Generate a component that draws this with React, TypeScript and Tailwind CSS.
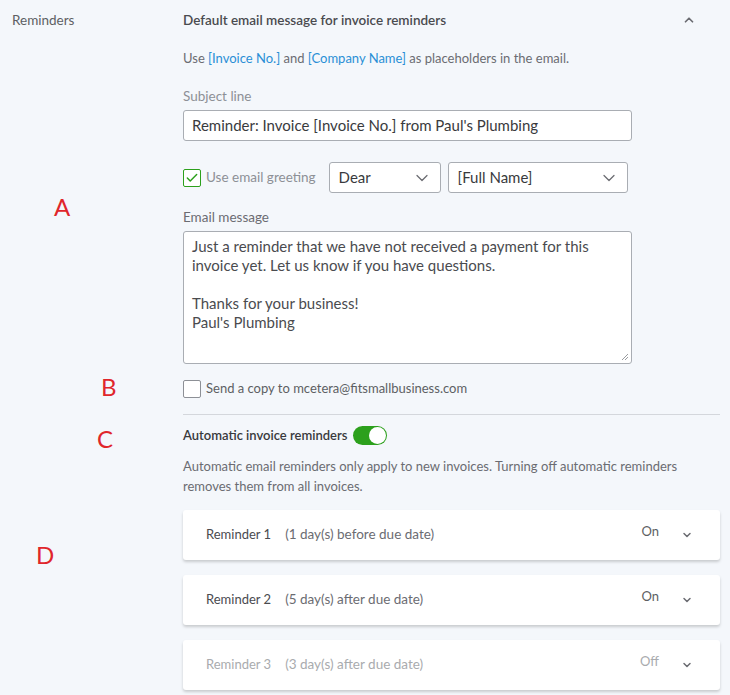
import { ChevronDown, ChevronUp, Check } from "lucide-react";

const reminders = [
  { name: "Reminder 1", when: "(1 day(s) before due date)", on: true },
  { name: "Reminder 2", when: "(5 day(s) after due date)", on: true },
  { name: "Reminder 3", when: "(3 day(s) after due date)", on: false },
];

function Letter({ children, className }: { children: string; className?: string }) {
  return (
    <span className={`text-[24px] leading-none text-[#e0262b] ${className ?? ""}`}>
      {children}
    </span>
  );
}

function Select({ value, width }: { value: string; width: string }) {
  return (
    <div
      className={`${width} h-[31px] bg-white border border-[#a9adb3] rounded-[3px] flex items-center justify-between pl-[9px] pr-[8px] text-[15px] text-[#393a3d]`}
    >
      <span>{value}</span>
      <ChevronDown size={20} strokeWidth={1.5} className="text-[#6b6c72]" />
    </div>
  );
}

export default function App() {
  return (
    <div
      className="min-h-screen w-[730px] bg-[#f4f7fb] text-[#393a3d]"
      style={{ fontFamily: "'Lato', 'Noto Sans', sans-serif" }}
    >
      {/* header row */}
      <div className="flex pt-[11px] leading-[18px]">
        <div className="w-[183px] pl-[12px] text-[13.5px] text-[#5d5f63]">Reminders</div>
        <div className="flex-1 flex items-center justify-between pr-[34px]">
          <span className="text-[13.5px] font-semibold text-[#4a4b4f]">
            Default email message for invoice reminders
          </span>
          <ChevronUp size={14} strokeWidth={3} className="text-[#6b6c72]" />
        </div>
      </div>

      {/* A: email message */}
      <div className="flex mt-[20px]">
        <div className="w-[183px] flex items-center pl-[54px]">
          <Letter>A</Letter>
        </div>
        <div className="flex-1 pr-[98px]">
          <p className="text-[13px] leading-[18px] text-[#6b6c72]">
            Use <span className="text-[#2a8fd6]">[Invoice No.]</span> and{" "}
            <span className="text-[#2a8fd6]">[Company Name]</span> as placeholders in the email.
          </p>
          <div className="mt-[20px] text-[13.5px] leading-[18px] text-[#8d9096]">Subject line</div>
          <div className="mt-[5px] h-[31px] bg-white border border-[#a9adb3] rounded-[3px] flex items-center px-[8px] text-[15px] text-[#393a3d]">
            Reminder: Invoice [Invoice No.] from Paul's Plumbing
          </div>
          <div className="mt-[21px] flex items-center">
            <div className="w-[18px] h-[18px] bg-white border border-[#2ca01c] rounded-[2px] flex items-center justify-center">
              <Check size={14} strokeWidth={2.5} className="text-[#2ca01c]" />
            </div>
            <span className="ml-[5px] text-[13.5px] text-[#8d9096]">Use email greeting</span>
            <div className="ml-[13px] flex gap-[7px]">
              <Select value="Dear" width="w-[112px]" />
              <Select value="[Full Name]" width="w-[180px]" />
            </div>
          </div>
          <div className="mt-[15px] text-[13.5px] leading-[18px] text-[#6b6c72]">Email message</div>
          <div className="mt-[5px] h-[133px] bg-white border border-[#a9adb3] rounded-[3px] px-[8px] py-[5px] text-[15px] leading-[19px] text-[#4a4b4f] relative">
            <p>
              Just a reminder that we have not received a payment for this
              <br />
              invoice yet. Let us know if you have questions.
            </p>
            <p className="mt-[19px]">
              Thanks for your business!
              <br />
              Paul's Plumbing
            </p>
            <svg className="absolute right-[2px] bottom-[2px]" width="8" height="8" viewBox="0 0 8 8">
              <path d="M7 1 L1 7 M7 4 L4 7" stroke="#9a9ca0" strokeWidth="1" />
            </svg>
          </div>
        </div>
      </div>

      {/* B: send copy */}
      <div className="flex mt-[11px] items-center">
        <div className="w-[183px] pl-[101px]">
          <Letter>B</Letter>
        </div>
        <div className="flex items-center">
          <div className="w-[18px] h-[18px] bg-white border border-[#8d9096] rounded-[2px]" />
          <span className="ml-[5px] text-[13px] text-[#5d5f63]">
            Send a copy to mcetera@fitsmallbusiness.com
          </span>
        </div>
      </div>

      <div className="ml-[183px] mr-[10px] mt-[12px] border-t border-[#d4d7dc]" />

      {/* C: automatic reminders */}
      <div className="flex mt-[11px]">
        <div className="w-[183px] pl-[97px] pt-[1px]">
          <Letter>C</Letter>
        </div>
        <div className="flex-1 pr-[10px]">
          <div className="flex items-center">
            <span className="text-[13px] font-semibold text-[#393a3d]">Automatic invoice reminders</span>
            <div className="ml-[6px] w-[34px] h-[19px] rounded-full bg-[#2ca01c] relative">
              <div className="absolute right-[1px] top-[1px] w-[17px] h-[17px] rounded-full bg-white" />
            </div>
          </div>
          <p className="mt-[10px] text-[13px] leading-[20px] text-[#6b6c72]">
            Automatic email reminders only apply to new invoices. Turning off automatic reminders
            <br />
            removes them from all invoices.
          </p>
        </div>
      </div>

      {/* D: reminder cards */}
      <div className="flex mt-[14px]">
        <div className="w-[183px] pl-[36px] pt-[33px]">
          <Letter>D</Letter>
        </div>
        <div className="flex-1 pr-[10px] flex flex-col gap-[15px]">
          {reminders.map((r) => (
            <div
              key={r.name}
              className="h-[50px] bg-white rounded-[3px] shadow-[0_2px_3px_rgba(0,0,0,0.18)] flex items-center pl-[23px] pr-[27px]"
            >
              <span className={`text-[13px] ${r.on ? "text-[#4a4b4f]" : "text-[#a9abae]"}`}>{r.name}</span>
              <span className={`ml-[14px] text-[13.5px] ${r.on ? "text-[#6b6c72]" : "text-[#a9abae]"}`}>
                {r.when}
              </span>
              <span className={`ml-auto text-[13px] ${r.on ? "text-[#5d5f63]" : "text-[#a9abae]"} -mt-[6px]`}>
                {r.on ? "On" : "Off"}
              </span>
              <ChevronDown size={12} strokeWidth={3} className="ml-[22px] text-[#6b6c72]" />
            </div>
          ))}
        </div>
      </div>
    </div>
  );
}
